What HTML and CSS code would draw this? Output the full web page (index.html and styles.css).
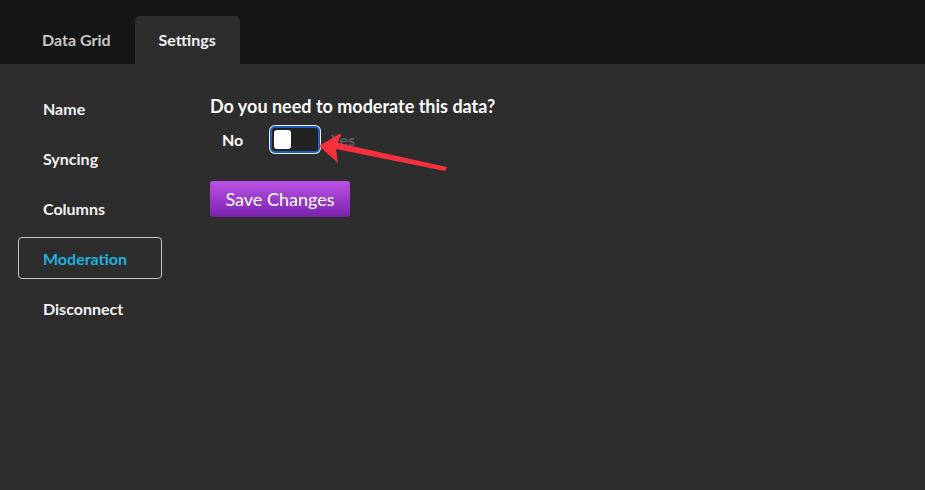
FILE: index.html
```html
<!DOCTYPE html>
<html lang="en">
<head>
<meta charset="UTF-8">
<meta name="viewport" content="width=device-width, initial-scale=1.0">
<title>Settings</title>
<link rel="stylesheet" href="styles.css">
</head>
<body>
<div class="topbar">
    <div class="tab">Data Grid</div>
    <div class="tab active">Settings</div>
</div>
<div class="main">
    <ul class="sidebar">
        <li class="nav-item">Name</li>
        <li class="nav-item">Syncing</li>
        <li class="nav-item">Columns</li>
        <li class="nav-item selected">Moderation</li>
        <li class="nav-item">Disconnect</li>
    </ul>
    <div class="content">
        <h2 class="question">Do you need to moderate this data?</h2>
        <div class="toggle-row">
            <span class="label-no">No</span>
            <span class="toggle"><span class="knob"></span></span>
            <span class="label-yes">Yes</span>
        </div>
        <button class="save-btn">Save Changes</button>
    </div>
    <svg class="arrow" width="140" height="50" viewBox="0 0 140 50">
        <polygon points="0,13 22,0 19,10 128,34 126,38 17,16 19,30" fill="#f3303c"/>
    </svg>
</div>
</body>
</html>
```

FILE: styles.css
```css
body {
    margin: 0;
    font-family: Lato, "Open Sans", sans-serif;
    background-color: #2d2d2d;
    height: 100vh;
    overflow: hidden;
}

.topbar {
    display: flex;
    align-items: flex-end;
    height: 64px;
    background-color: #151515;
    padding-left: 18px;
}

.tab {
    height: 48px;
    line-height: 48px;
    padding: 0 24px;
    font-size: 16px;
    font-weight: 700;
    color: #c8c8c8;
    border-radius: 5px 5px 0 0;
}

.tab.active {
    background-color: #2d2d2d;
    color: #f2f2f2;
}

.main {
    position: relative;
    display: flex;
}

.sidebar {
    list-style: none;
    margin: 0;
    padding: 23px 0 0 18px;
    width: 144px;
}

.nav-item {
    height: 42px;
    line-height: 42px;
    margin-bottom: 8px;
    padding-left: 24px;
    font-size: 16px;
    font-weight: 700;
    color: #f2f2f2;
    border: 1px solid transparent;
    border-radius: 4px;
    box-sizing: border-box;
}

.nav-item.selected {
    color: #1cb3df;
    border-color: #c4c4c4;
}

.content {
    padding: 31px 0 0 48px;
}

.question {
    margin: 0;
    font-size: 18px;
    font-weight: 700;
    color: #fafafa;
    line-height: 22px;
}

.toggle-row {
    display: flex;
    align-items: center;
    margin-top: 8px;
    height: 28px;
}

.label-no {
    font-size: 16px;
    font-weight: 700;
    color: #fafafa;
    margin-left: 12px;
    width: 48px;
}

.toggle {
    display: flex;
    align-items: center;
    width: 50px;
    height: 27px;
    box-sizing: border-box;
    background-color: #222;
    border: 2px solid #1a5fbf;
    border-radius: 5px;
    box-shadow: 0 0 0 1px #f0f0f0;
    padding-left: 2px;
}

.knob {
    width: 17px;
    height: 19px;
    background-color: #fff;
    border-radius: 3px;
}

.label-yes {
    margin-left: 11px;
    font-size: 16px;
    font-weight: 700;
    color: #5e5e5e;
}

.save-btn {
    margin-top: 28px;
    width: 140px;
    height: 36px;
    font-family: Lato, sans-serif;
    font-size: 18px;
    color: #fff;
    border: none;
    border-radius: 3px;
    background: linear-gradient(#bb52e6, #7a22ac);
    padding: 0;
    cursor: pointer;
}

.arrow {
    position: absolute;
    left: 319px;
    top: 69px;
}
```
